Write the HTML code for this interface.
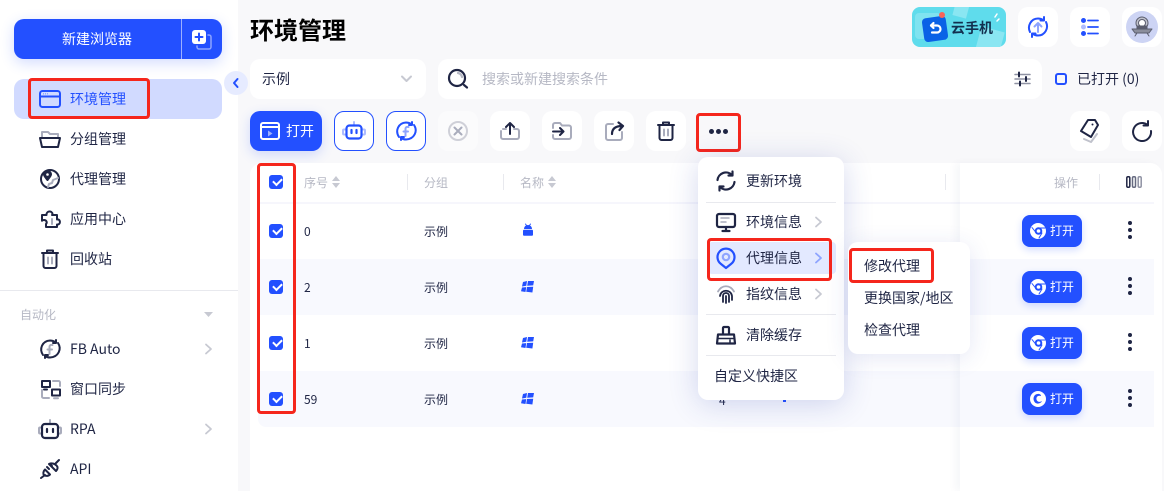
<!DOCTYPE html>
<html lang="zh-CN"><head><meta charset="utf-8"><title>环境管理</title>
<style>
*{box-sizing:border-box}
html,body{margin:0;padding:0}
body{width:1164px;height:491px;position:relative;overflow:hidden;background:#f8f8fa;font-family:"Noto Sans CJK SC","Liberation Sans",sans-serif;color:#1f2544;font-size:14px}
.a{position:absolute}
.t{position:absolute;white-space:nowrap;line-height:20px;height:20px}
.s{font-size:12px}
.g{color:#b6b8c4}
svg{position:absolute;overflow:visible;fill:none;stroke-linecap:round;stroke-linejoin:round}
.w{position:absolute;background:#fff;border-radius:10px}
.ib{position:absolute;background:#fff;border-radius:10px;width:40px;height:40px}
.red{position:absolute;border:3px solid #f5261c;border-radius:4px}
.row{position:absolute;left:258px;width:896px;height:56px}
.cb{position:absolute;width:14px;height:14px;background:#2350ff;border-radius:3px}
.cb:after{content:"";position:absolute;left:3.5px;top:2.5px;width:7px;height:4px;border-left:2px solid #fff;border-bottom:2px solid #fff;transform:rotate(-45deg)}
.open{position:absolute;left:1022px;width:60px;height:32px;background:#2350ff;border-radius:8px;box-shadow:0 3px 8px rgba(35,80,255,.2);color:#fff;font-size:12px;line-height:32px;padding-left:28px}
.dot{position:absolute;left:1128px;width:4px;height:4px;border-radius:50%;background:#1f2544}
.sep{position:absolute;width:1px;height:16px;top:174px;background:#e8e9ee}
.div{position:absolute;left:706px;width:130px;height:1px;background:#e8e9ee}
</style></head><body>

<!-- sidebar -->
<div class="a" style="left:0;top:0;width:238px;height:491px;background:#fff"></div>
<div class="a" style="left:14px;top:19px;width:208px;height:40px;background:#2350ff;border-radius:10px;box-shadow:0 4px 14px rgba(35,80,255,.2)"></div>
<div class="a" style="left:181px;top:19px;width:1px;height:40px;background:#9db0ff"></div>
<div class="t" style="left:62px;top:29px;color:#fff">新建浏览器</div>
<svg style="left:192px;top:30px" width="20" height="20"><path d="M16 5h1a2 2 0 0 1 2 2v10a2 2 0 0 1-2 2H7a2 2 0 0 1-2-2v-1" stroke="#8ea4ff" stroke-width="1.500"/><rect x="0" y="0" width="14" height="14" rx="3" fill="#fff"/><path d="M7 3.500v7M3.500 7h7" stroke="#2350ff" stroke-width="2"/></svg>

<div class="a" style="left:14px;top:79px;width:208px;height:40px;background:#d1daff;border-radius:10px"></div>
<div class="a" style="left:224px;top:71px;width:24px;height:24px;border-radius:50%;background:#e6ebff"></div>
<svg style="left:233px;top:78px" width="6" height="10"><path d="M4.500 1L1 5l3.500 4" stroke="#2350ff" stroke-width="2"/></svg>
<svg style="left:39px;top:90px" width="22" height="18" stroke="#2350ff" stroke-width="2"><rect x="1" y="1" width="20" height="16" rx="2.500"/><path d="M1 6.500h20"/><path d="M4 3.800h5" stroke="#8ea4ff" stroke-dasharray="1 1" stroke-linecap="butt" stroke-width="1.500"/></svg>
<div class="t" style="left:70px;top:89px;color:#2350ff">环境管理</div>
<div class="red" style="left:28px;top:78px;width:122px;height:41px"></div>

<svg style="left:39px;top:130px" width="22" height="18" stroke-width="2"><path d="M3 8V2h6l2 2h8v4" stroke="#a9acbc"/><path d="M1 8h20l-2 9H3z" stroke="#1f2544"/></svg>
<div class="t" style="left:70px;top:129px">分组管理</div>
<svg style="left:40px;top:169px" width="20" height="20" stroke-width="2"><circle cx="10" cy="10" r="9" stroke="#1f2544"/><path d="M7 2c3 0 4 2 4 3.500S8 10 7.500 11C6 9 4 7 4 5.500 4 3.500 5.500 2 7 2z" fill="#1f2544" stroke="#1f2544"/><circle cx="7.500" cy="5.500" r="1.300" fill="#fff" stroke="none"/><path d="M18 9l-5 2-1 3-3 1-1 3" stroke="#a9acbc"/></svg>
<div class="t" style="left:70px;top:169px">代理管理</div>
<svg style="left:41px;top:209px" width="20" height="20" stroke="#1f2544" stroke-width="2"><path d="M1 6h4.500c-.5-4 5.500-5 6-1 0 .5-.3 1-.5 1H16v4.500c3-.8 4 3.700 1.500 4.800-.5.200-1 .2-1.500.2V18H5v-3c1.500-1.500.5-4-2-4-.7 0-1.400.2-2 .7z"/><path d="M11 10v5" stroke="#a9acbc"/></svg>
<div class="t" style="left:70px;top:209px">应用中心</div>
<svg style="left:41px;top:249px" width="18" height="20" stroke-width="2"><path d="M1 4h16M6 4V1.500h6V4" stroke="#1f2544"/><path d="M2.500 4v13a2 2 0 0 0 2 2h9a2 2 0 0 0 2-2V4" stroke="#1f2544"/><path d="M7 8.500v6M11 8.500v6" stroke="#a9acbc"/></svg>
<div class="t" style="left:70px;top:249px">回收站</div>
<div class="a" style="left:0;top:290px;width:238px;height:1px;background:#e8e9ee"></div>
<div class="t s g" style="left:20px;top:305px">自动化</div>
<svg style="left:204px;top:312px" width="9" height="5"><path d="M0 0h9L4.500 5z" fill="#c7c9d2"/></svg>
<svg style="left:40px;top:339px" width="21" height="20" stroke="#1f2544" stroke-width="2"><path d="M3 16C-1 10 2 2 10 1.500c2 0 3.500.5 5 1.500M18 4c4 6 .5 14-8 14.500-2 0-3.500-.5-5-1.500"/><path d="M16 1v3h-3M5 19v-3h3"/><path d="M12.500 6c-2-.5-3 .3-3 2v7M7.500 10.500h4.500" stroke="#a9acbc"/></svg>
<div class="t" style="left:70px;top:339px">FB Auto</div>
<svg style="left:205px;top:344px" width="7" height="10"><path d="M1 .5l5 4.500-5 4.500" stroke="#c7c9d2" stroke-width="1.800"/></svg>
<svg style="left:41px;top:380px" width="20" height="19" stroke-width="2"><rect x="1" y="1" width="8" height="6" stroke="#1f2544"/><rect x="11" y="9.500" width="8" height="6" stroke="#1f2544"/><path d="M13 18.300h4M12 1h5.500a1.500 1.500 0 0 1 1.500 1.500V6M1 10v6.500A1.500 1.500 0 0 0 2.500 18H8" stroke="#a9acbc"/><path d="M3 9.500h3" stroke="#1f2544"/></svg>
<div class="t" style="left:70px;top:379px">窗口同步</div>
<svg style="left:38px;top:419px" width="24" height="20"><path d="M12 1v3" stroke="#a9acbc" stroke-width="2"/><path d="M3 8.500H2a1 1 0 0 0-1 1v4a1 1 0 0 0 1 1h1M21 8.500h1a1 1 0 0 1 1 1v4a1 1 0 0 1-1 1h-1" stroke="#a9acbc" stroke-width="2"/><rect x="4" y="5" width="16" height="14" rx="3" stroke="#1f2544" stroke-width="2.200"/><path d="M9 10v3M15 10v3" stroke="#1f2544" stroke-width="2.200"/></svg>
<div class="t" style="left:70px;top:419px">RPA</div>
<svg style="left:205px;top:424px" width="7" height="10"><path d="M1 .5l5 4.500-5 4.500" stroke="#c7c9d2" stroke-width="1.800"/></svg>
<svg style="left:40px;top:459px" width="20" height="20" stroke="#1f2544" stroke-width="2"><path d="M1 19l4-3"/><path d="M5 10.500l5 5c-2 2-5 1.500-6 .5s-1-3.500 1-5.500z"/><path d="M7 8l2 2M10 5l2 2M9 5l7 7c2-2 2-4 .5-5.500C15 5 12 3.500 9 5z"/><path d="M15 5l4-4"/></svg>
<div class="t" style="left:70px;top:459px">API</div>

<!-- header -->
<div class="t" style="left:250px;top:11px;font-size:24px;font-weight:700;color:#000;line-height:36px;height:36px">环境管理</div>

<div class="a" style="left:912px;top:7px;width:94px;height:40px;border-radius:8px;background:#5fdcec;overflow:hidden">
  <div class="a" style="left:42px;top:-4px;width:14px;height:14px;background:#8ae6f2;transform:rotate(15deg)"></div>
  <div class="a" style="left:66px;top:22px;width:24px;height:24px;background:#8ae6f2;transform:rotate(15deg)"></div>
  <div class="a" style="left:3px;top:6px;width:26px;height:26px;background:#7fe3f0;border-radius:4px"></div>
</div>
<div class="a" style="left:923px;top:17px;width:24px;height:24px;background:#0a62e6;border-radius:4px;transform:rotate(-8deg)"></div>
<svg style="left:928px;top:23px" width="15" height="13" stroke="#fff" stroke-width="2.200"><path d="M3 2.500h6a3.500 3.500 0 0 1 0 7H4"/><path d="M5.500 0L3 2.500 5.500 5"/></svg>
<div class="a" style="left:939px;top:12px;width:6px;height:6px;border-radius:50%;background:#f7645a"></div>
<div class="t" style="left:951px;top:18px;font-size:14px;font-weight:700;color:#12304f">云手机</div>
<svg style="left:992px;top:13px" width="8" height="10" stroke="#fff" stroke-width="1.500"><path d="M3 4l2-3M5 8l2-2"/></svg>

<div class="ib" style="left:1018px;top:7px"></div>
<svg style="left:1028px;top:17px" width="20" height="20" stroke="#2350ff" stroke-width="2"><path d="M2 15C-1 9 3 1.500 10 1.500c2 0 3.500.5 5 1.500M18 5c3 6-1 13.500-8 13.500-2 0-3.500-.5-5-1.500"/><path d="M16 0v3.500h-3.500M4 20v-3.500h3.500"/><path d="M10 15V6M6.500 9.500L10 6l3.500 3.500" stroke="#8ea4ff"/></svg>
<div class="ib" style="left:1070px;top:7px"></div>
<svg style="left:1081px;top:18px" width="18" height="18" stroke="#2350ff" stroke-width="1.800"><path d="M7 2.500h10M7 9h10M7 15.500h10"/><circle cx="2.500" cy="2.500" r="1.600" fill="#2350ff"/><circle cx="2.500" cy="9" r="1.600" fill="#aebcff" stroke="#aebcff"/><circle cx="2.500" cy="15.500" r="1.600" fill="#2350ff"/></svg>
<div class="ib" style="left:1122px;top:7px"></div>
<div class="a" style="left:1126px;top:11px;width:32px;height:32px;border-radius:50%;background:#cdd4f4"></div>
<svg style="left:1131px;top:15px" width="22" height="24" stroke="#5a5d6e" stroke-width="1"><circle cx="11" cy="8" r="6" fill="#bfc1cc"/><circle cx="11" cy="8" r="3.500" fill="#fff"/><path d="M1 14h20l-3 4H4z" fill="#8b8e9c"/><path d="M6 11h10v3H6z" fill="#5a5d6e"/><path d="M6 18l-2 3M16 18l2 3"/></svg>

<div class="w" style="left:250px;top:59px;width:176px;height:40px"></div>
<div class="t" style="left:262px;top:69px;font-size:14px">示例</div>
<svg style="left:401px;top:75px" width="11" height="8"><path d="M1 1.500l4.500 4.500L10 1.500" stroke="#c7c9d2" stroke-width="2"/></svg>
<div class="w" style="left:438px;top:59px;width:604px;height:40px"></div>
<svg style="left:448px;top:69px" width="21" height="20" stroke="#1f2544" stroke-width="2.200"><circle cx="9" cy="9" r="8"/><path d="M16 16l3 2.500"/><path d="M10 4c2 .3 3.500 1.800 4 4" stroke="#b6b8c4"/></svg>
<div class="t g" style="left:482px;top:69px;font-size:14px">搜索或新建搜索条件</div>
<svg style="left:1015px;top:72px" width="15" height="14" stroke="#1f2544" stroke-width="1.500"><path d="M0 2.500h15M0 7h15M0 11.500h15" stroke="#8f92a3"/><path d="M4 .5v4M11 5v4M5 9.500v4" stroke-width="2"/></svg>
<div class="a" style="left:1055px;top:73px;width:12px;height:12px;border:2px solid #2350ff;border-radius:3px"></div>
<div class="t" style="left:1077px;top:69px">已打开 (0)</div>

<!-- toolbar -->
<div class="a" style="left:250px;top:111px;width:72px;height:40px;background:#2350ff;border-radius:10px;box-shadow:0 4px 12px rgba(35,80,255,.18)"></div>
<svg style="left:260px;top:122px" width="20" height="18" stroke="#fff" stroke-width="2"><rect x="1" y="1" width="18" height="16" rx="2"/><path d="M1 5h18"/><path d="M8 8.500l4.500 3L8 14.500z" fill="#9db0ff" stroke="none"/></svg>
<div class="t" style="left:286px;top:121px;color:#fff;font-size:14px">打开</div>
<div class="a" style="left:334px;top:111px;width:40px;height:40px;background:#fff;border:1px solid #2350ff;border-radius:10px"></div>
<svg style="left:342px;top:121px" width="24" height="20"><path d="M12 1v3" stroke="#aebcff" stroke-width="2"/><path d="M3 8.500H2a1 1 0 0 0-1 1v3a1 1 0 0 0 1 1h1M21 8.500h1a1 1 0 0 1 1 1v3a1 1 0 0 1-1 1h-1" stroke="#aebcff" stroke-width="2"/><rect x="4.500" y="4.500" width="15" height="13" rx="3" stroke="#2350ff" stroke-width="2.200"/><path d="M9.500 9v3M14.500 9v3" stroke="#2350ff" stroke-width="2.200"/></svg>
<div class="a" style="left:386px;top:111px;width:40px;height:40px;background:#fff;border:1px solid #2350ff;border-radius:10px"></div>
<svg style="left:396px;top:121px" width="21" height="20" stroke="#2350ff" stroke-width="2"><path d="M3 16C-1 10 2 2 10 1.500c2 0 3.500.5 5 1.500M18 4c4 6 .5 14-8 14.500-2 0-3.500-.5-5-1.500"/><path d="M16 1v3h-3M5 19v-3h3"/><path d="M12.500 6c-2-.5-3 .3-3 2v7M7.500 10.500h4.500" stroke="#8ea4ff"/></svg>
<div class="ib" style="left:438px;top:111px;background:#fbfbfc"></div>
<svg style="left:448px;top:121px" width="20" height="20" stroke="#cfd0d8" stroke-width="2"><circle cx="10" cy="10" r="9"/><path d="M6.500 6.500l7 7M13.500 6.500l-7 7" stroke="#a9acbc"/></svg>
<div class="ib" style="left:490px;top:111px"></div>
<svg style="left:500px;top:122px" width="20" height="18" stroke-width="2"><path d="M10 12V1.500M6 5l4-4 4 4" stroke="#1f2544"/><path d="M1 9v6a2 2 0 0 0 2 2h14a2 2 0 0 0 2-2V9a2 2 0 0 0-2-2h-3M6 7H3" stroke="#a9acbc"/></svg>
<div class="ib" style="left:542px;top:111px"></div>
<svg style="left:552px;top:122px" width="20" height="18" stroke-width="2"><path d="M1 6V3a2 2 0 0 1 2-2h5l2 2.500h7a2 2 0 0 1 2 2V15a2 2 0 0 1-2 2H3a2 2 0 0 1-2-2v-2" stroke="#a9acbc"/><path d="M1 9.500h10M8 6l3.500 3.500L8 13" stroke="#1f2544"/></svg>
<div class="ib" style="left:594px;top:111px"></div>
<svg style="left:605px;top:121px" width="20" height="20" stroke-width="2"><path d="M8 3H3a2 2 0 0 0-2 2v12a2 2 0 0 0 2 2h12a2 2 0 0 0 2-2v-6" stroke="#a9acbc"/><path d="M7 13c0-5 3-8 10-8M13.500 1.500L18 5l-3.500 4" stroke="#1f2544" stroke-width="2.200"/></svg>
<div class="ib" style="left:646px;top:111px"></div>
<svg style="left:657px;top:121px" width="18" height="20" stroke-width="2"><path d="M1 4h16M6 4V1.500h6V4" stroke="#1f2544"/><path d="M2.500 4v13a2 2 0 0 0 2 2h9a2 2 0 0 0 2-2V4" stroke="#1f2544"/><path d="M7 8.500v6M11 8.500v6" stroke="#a9acbc"/></svg>
<div class="a" style="left:709px;top:129px;width:5px;height:5px;border-radius:50%;background:#1f2544;box-shadow:7px 0 0 #1f2544,14px 0 0 #1f2544"></div>
<div class="red" style="left:696px;top:113px;width:45px;height:39px"></div>
<div class="ib" style="left:1070px;top:111px"></div>
<svg style="left:1079px;top:119px" width="21" height="24" stroke-width="2"><path d="M5 20l7 3 6-8" stroke="#c0c2cc"/><path d="M9 1h7l3 5-7 12-10-6z" stroke="#1f2544"/><circle cx="13.500" cy="5.500" r="1" fill="#1f2544" stroke="none"/></svg>
<div class="ib" style="left:1122px;top:111px"></div>
<svg style="left:1132px;top:121px" width="20" height="20" stroke="#1f2544" stroke-width="2"><path d="M15 3.500A9 9 0 1 0 19 10"/><path d="M16 0v4.500h-4.500"/></svg>

<!-- table -->
<div class="a" style="left:250px;top:163px;width:912px;height:328px;background:#fff;border-radius:12px 12px 0 0"></div>
<div class="a" style="left:258px;top:202px;width:896px;height:2px;background:#f6f6fc"></div>
<div class="row" style="top:259px;background:#f8f9fe"></div>
<div class="row" style="top:371px;background:#f8f9fe;border-radius:0 0 0 8px"></div>

<div class="cb" style="left:269px;top:175px"></div>
<div class="t s g" style="left:304px;top:173px">序号</div>
<svg style="left:332px;top:176px" width="8" height="12"><path d="M0 5l4-5 4 5zM0 7l4 5 4-5z" fill="#c7c9d2"/></svg>
<div class="sep" style="left:407px"></div>
<div class="t s g" style="left:424px;top:173px">分组</div>
<div class="sep" style="left:503px"></div>
<div class="t s g" style="left:520px;top:173px">名称</div>
<svg style="left:548px;top:176px" width="8" height="12"><path d="M0 5l4-5 4 5zM0 7l4 5 4-5z" fill="#c7c9d2"/></svg>

<div class="cb" style="left:269px;top:224px"></div><div class="t s" style="left:304px;top:222px">0</div><div class="t s" style="left:424px;top:222px">示例</div>
<svg style="left:522px;top:224px" width="12" height="14"><path d="M2 5a4 4 0 0 1 8 0z" fill="#2350ff"/><rect x="1" y="5.800" width="10" height="6" rx="1" fill="#2350ff"/><path d="M3.500 0l1 1.500M8.500 0l-1 1.500" stroke="#2350ff"/></svg>
<div class="cb" style="left:269px;top:280px"></div><div class="t s" style="left:304px;top:278px">2</div><div class="t s" style="left:424px;top:278px">示例</div>
<svg style="left:521px;top:281px" width="14" height="12"><path d="M2 1l4-1-.7 4.800-4.300.7zM7 0l6-.0-.8 4.400-6 .4zM1 6.500l4.200-.4-.7 4.900-4.500-.7zM6 6l6.200-.2-.8 5.700-6.200-.8z" fill="#2350ff"/></svg>
<div class="cb" style="left:269px;top:336px"></div><div class="t s" style="left:304px;top:334px">1</div><div class="t s" style="left:424px;top:334px">示例</div>
<svg style="left:521px;top:337px" width="14" height="12"><path d="M2 1l4-1-.7 4.800-4.300.7zM7 0l6-.0-.8 4.400-6 .4zM1 6.500l4.200-.4-.7 4.900-4.500-.7zM6 6l6.200-.2-.8 5.700-6.200-.8z" fill="#2350ff"/></svg>
<div class="cb" style="left:269px;top:392px"></div><div class="t s" style="left:304px;top:390px">59</div><div class="t s" style="left:424px;top:390px">示例</div>
<svg style="left:521px;top:393px" width="14" height="12"><path d="M2 1l4-1-.7 4.800-4.300.7zM7 0l6-.0-.8 4.400-6 .4zM1 6.500l4.200-.4-.7 4.900-4.500-.7zM6 6l6.200-.2-.8 5.700-6.200-.8z" fill="#2350ff"/></svg>
<div class="sep" style="left:945px"></div>
<div class="t s" style="left:719px;top:391px">4</div>
<div class="a" style="left:783px;top:400px;width:3px;height:2px;background:#2350ff"></div>

<!-- fixed right column -->
<div class="a" style="left:960px;top:163px;width:202px;height:328px;background:#fff;border-radius:0 12px 0 0;box-shadow:-5px 0 8px rgba(30,40,90,.04)"></div>
<div class="a" style="left:960px;top:202px;width:194px;height:2px;background:#f6f6fc"></div>
<div class="a" style="left:960px;top:259px;width:194px;height:56px;background:#f8f9fe"></div>
<div class="a" style="left:960px;top:371px;width:194px;height:56px;background:#f8f9fe"></div>
<div class="t s g" style="left:1054px;top:173px">操作</div>
<div class="sep" style="left:1099px"></div>
<svg style="left:1126px;top:176px" width="16" height="12" stroke="#1f2544" stroke-width="1.500"><rect x=".8" y=".8" width="3" height="10.400" rx="1.200"/><rect x="6.500" y=".8" width="3" height="10.400" rx="1.200" stroke="#666a80"/><rect x="12.200" y=".8" width="3" height="10.400" rx="1.200" stroke="#8f92a3"/></svg>

<div class="open" style="top:215px">打开</div>
<div class="open" style="top:271px">打开</div>
<div class="open" style="top:327px">打开</div>
<div class="open" style="top:383px">打开</div>
<svg style="left:1030px;top:223px" width="16" height="16"><circle cx="8" cy="8" r="8" fill="#fff"/><circle cx="8.500" cy="8" r="3.800" fill="#2350ff"/><circle cx="8.500" cy="8" r="1.800" fill="#fff"/><path d="M2 4.500L6 9.500M15 5H9M9 15l3-5" stroke="#2350ff"/></svg>
<svg style="left:1030px;top:279px" width="16" height="16"><circle cx="8" cy="8" r="8" fill="#fff"/><circle cx="8.500" cy="8" r="3.800" fill="#2350ff"/><circle cx="8.500" cy="8" r="1.800" fill="#fff"/><path d="M2 4.500L6 9.500M15 5H9M9 15l3-5" stroke="#2350ff"/></svg>
<svg style="left:1030px;top:335px" width="16" height="16"><circle cx="8" cy="8" r="8" fill="#fff"/><circle cx="8.500" cy="8" r="3.800" fill="#2350ff"/><circle cx="8.500" cy="8" r="1.800" fill="#fff"/><path d="M2 4.500L6 9.500M15 5H9M9 15l3-5" stroke="#2350ff"/></svg>
<svg style="left:1030px;top:391px" width="16" height="16"><circle cx="8" cy="8" r="8" fill="#fff"/><path d="M5 4c3-2 6-1 6 1-3-1-5 1-4.500 3.500C7 11 10 11.500 12 10c-1 2.500-5 3.500-7 1.500S3 6 5 4z" fill="#2350ff"/></svg>

<div class="dot" style="top:221px"></div><div class="dot" style="top:228px"></div><div class="dot" style="top:235px"></div>
<div class="dot" style="top:277px"></div><div class="dot" style="top:284px"></div><div class="dot" style="top:291px"></div>
<div class="dot" style="top:333px"></div><div class="dot" style="top:340px"></div><div class="dot" style="top:347px"></div>
<div class="dot" style="top:389px"></div><div class="dot" style="top:396px"></div><div class="dot" style="top:403px"></div>

<div class="red" style="left:257px;top:163px;width:39px;height:251px"></div>

<!-- dropdown menu -->
<div class="w" style="left:698px;top:157px;width:146px;height:243px;box-shadow:0 4px 30px rgba(40,60,170,.2)"></div>
<svg style="left:716px;top:171px" width="20" height="20" stroke="#1f2544" stroke-width="2.200"><path d="M1.500 9A8.500 8.500 0 0 1 16 4M18.500 11A8.500 8.500 0 0 1 4 16"/><path d="M16.500 0.500V4.500H12.500M3.500 19.500V15.500H7.500"/></svg>
<div class="t" style="left:746px;top:171px">更新环境</div>
<div class="div" style="top:202px"></div>
<svg style="left:716px;top:213px" width="20" height="19" stroke="#1f2544" stroke-width="2.200"><rect x="1" y="1" width="18" height="13" rx="2"/><path d="M5 5h8M5 9h5" stroke="#a9acbc" stroke-width="1.500"/><path d="M10 14v4M6.500 18h7"/></svg>
<div class="t" style="left:746px;top:212px">环境信息</div>
<svg style="left:815px;top:217px" width="7" height="10"><path d="M1 .5l5 4.500-5 4.500" stroke="#c7c9d2" stroke-width="1.800"/></svg>
<div class="a" style="left:708px;top:242px;width:128px;height:32px;background:#e3e9ff;border-radius:4px"></div>
<svg style="left:717px;top:248px" width="18" height="21" stroke="#2350ff" stroke-width="2.200"><path d="M9 20L4 16A8.500 8.500 0 1 1 14 16z"/><circle cx="9" cy="9" r="3.200" stroke="#8ea4ff"/></svg>
<div class="t" style="left:746px;top:248px">代理信息</div>
<svg style="left:815px;top:253px" width="7" height="10"><path d="M1 .5l5 4.500-5 4.500" stroke="#8ea4ff" stroke-width="1.800"/></svg>
<div class="red" style="left:707px;top:238px;width:125px;height:43px"></div>
<svg style="left:717px;top:285px" width="18" height="19" stroke-width="1.800"><path d="M1 6.500C5-.5 13-.5 17 6.500" stroke="#a9acbc"/><path d="M3 11c1-7 11-7 12 0v4M6 17v-6c0-4 6-4 6 0v6M9 11v7" stroke="#1f2544"/></svg>
<div class="t" style="left:746px;top:284px">指纹信息</div>
<svg style="left:815px;top:289px" width="7" height="10"><path d="M1 .5l5 4.500-5 4.500" stroke="#c7c9d2" stroke-width="1.800"/></svg>
<div class="div" style="top:314px"></div>
<svg style="left:716px;top:325px" width="20" height="20" stroke="#1f2544" stroke-width="2.200"><path d="M7 9V3a1 1 0 0 1 1-1h4a1 1 0 0 1 1 1v6"/><path d="M2 9.500h16l1 9H1z"/><path d="M3 13.500h14M14 18v-3" stroke-width="1.500"/></svg>
<div class="t" style="left:746px;top:325px">清除缓存</div>
<div class="div" style="top:355px"></div>
<div class="t" style="left:714px;top:366px">自定义快捷区</div>

<!-- submenu -->
<div class="w" style="left:848px;top:242px;width:122px;height:112px;box-shadow:0 4px 24px rgba(40,60,170,.12)"></div>
<div class="t" style="left:864px;top:256px">修改代理</div>
<div class="red" style="left:849px;top:248px;width:85px;height:35px"></div>
<div class="t" style="left:864px;top:288px">更换国家/地区</div>
<div class="t" style="left:864px;top:320px">检查代理</div>

</body></html>
